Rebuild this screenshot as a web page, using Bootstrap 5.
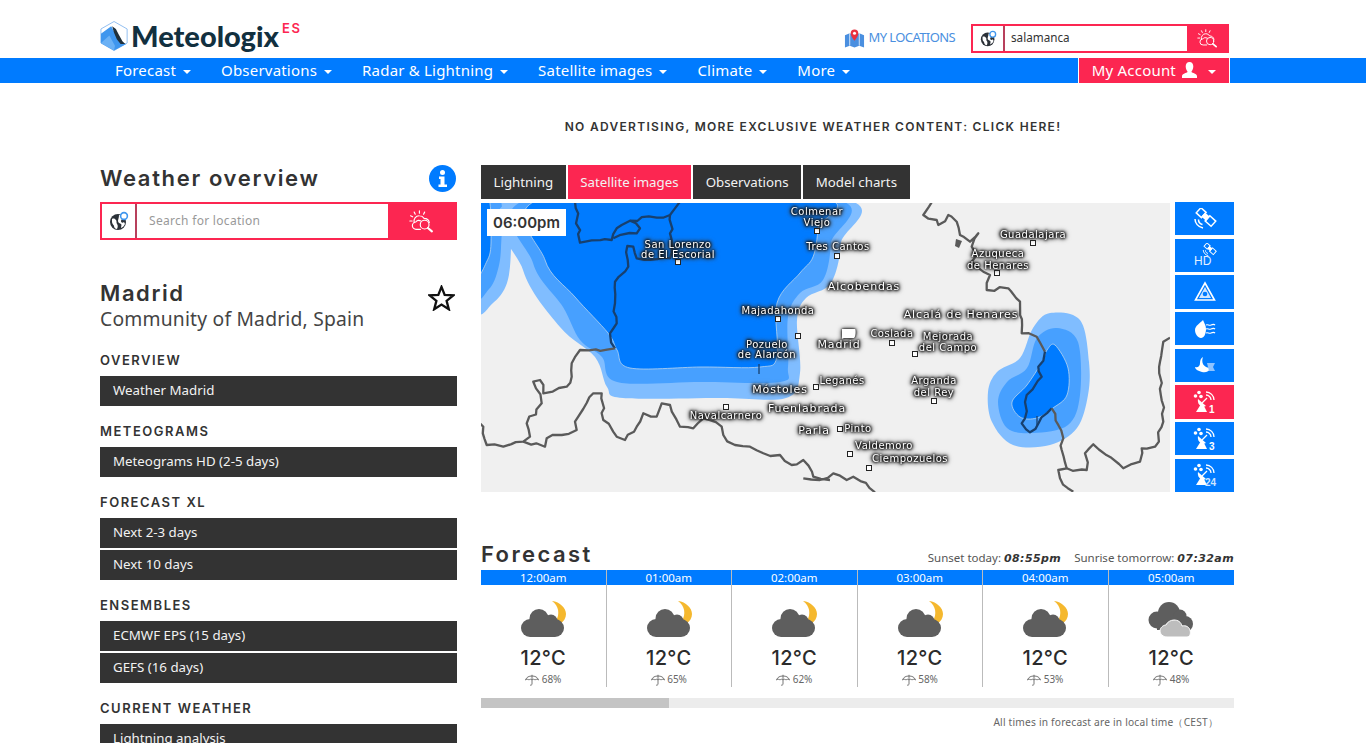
<!DOCTYPE html>
<html lang="en">
<head>
    <meta charset="UTF-8">
    <meta name="viewport" content="width=device-width, initial-scale=1.0">
    <title>Weather overview Madrid - Meteologix</title>
    <link rel="stylesheet" href="https://cdn.jsdelivr.net/npm/bootstrap@5.3.0/dist/css/bootstrap.min.css">
    <style>
        body {
            background: #fff;
            color: #333;
            font-family: "Noto Sans", "Open Sans", sans-serif;
            font-size: 14px;
            height: 743px;
            overflow: hidden;
        }
        .head-font {
            font-family: Inter, "Liberation Sans", sans-serif;
            font-weight: 600;
        }
        .site-wrap { width: 1134px; margin-left: 100px; }
        .top-head { height: 58px; }
        .top-row { height: 58px; padding-top: 18px; }
        .brand-link { margin-top: -5px; }
        .brand-name {
            font-family: Lato, sans-serif;
            font-weight: 900;
            font-size: 29px;
            color: #12303f;
            line-height: 1;
            margin-left: 2px;
        }
        .brand-cc {
            font-family: Inter, sans-serif;
            font-weight: 600;
            color: #fc2651;
            font-size: 13px;
            letter-spacing: 1.5px;
            margin-top: -14px;
            margin-left: 3px;
        }
        .my-locs {
            color: #4a8fe0;
            font-size: 13px;
            letter-spacing: -.6px;
            text-decoration: none;
        }
        .search-top {
            width: 258px;
            height: 29px;
            border: 2px solid #fc2651;
            margin-left: 16px;
            margin-right: 5px;
        }
        .search-side { height: 38px; border: 2px solid #fc2651; }
        .globe-box {
            border-right: 2px solid #b8405c;
            display: flex;
            align-items: center;
            justify-content: center;
        }
        .search-top .globe-box { width: 32px; }
        .search-side .globe-box { width: 35px; }
        .search-input {
            border: 0;
            outline: 0;
            flex: 1;
            min-width: 0;
            color: #333;
            background: #fff;
        }
        .search-top .search-input { font-size: 11.7px; padding: 0 6px; }
        .search-side .search-input { font-size: 12px; padding: 0 12px; letter-spacing: .3px; }
        .search-input::placeholder { color: #999; opacity: 1; }
        .search-go {
            background: #fc2651;
            display: flex;
            align-items: center;
            justify-content: center;
        }
        .search-top .search-go { width: 40px; }
        .search-side .search-go { width: 67px; }
        .main-nav { background: #007bff; height: 25px; padding: 0; }
        .main-nav .site-wrap { height: 25px; }
        .main-nav .nav-link {
            color: #fff;
            font-size: 15px;
            line-height: 25px;
            padding: 0;
            white-space: nowrap;
            letter-spacing: .2px;
        }
        .main-nav .dropdown-toggle::after { margin-left: 7px; vertical-align: 2px; border-top-width: 4px; border-left-width: 4px; border-right-width: 4px; }
        .nav-gap { gap: 30px; padding-left: 15px; }
        .account-btn {
            background: #fc2651;
            width: 152px;
            margin-right: 4px;
            border-left: 1px solid #fff;
            border-right: 1px solid #fff;
            display: flex;
            align-items: center;
            justify-content: center;
        }
        .account-ico { vertical-align: -2px; margin-left: 2px; }
        .promo-line {
            font-size: 12px;
            letter-spacing: 1.3px;
            color: #333;
            text-align: center;
            height: 82px;
            padding-top: 37px;
            padding-left: 292px;
            line-height: 14px;
            white-space: nowrap;
        }
        .side-col { width: 357px; }
        .main-col { width: 753px; }
        .col-gap { gap: 24px; }
        .side-title {
            font-size: 22px;
            letter-spacing: 1.65px;
            line-height: 26px;
            margin: 0;
            color: #333;
        }
        .side-top { height: 37px; padding-top: 0; }
        .info-ico { margin-right: 1px; }
        .star-ico { margin-right: 2px; margin-top: 5px; }
        .place-name { font-size: 22px; letter-spacing: 1.6px; line-height: 26px; margin: 0; color: #333; }
        .place-sub { font-size: 19.3px; line-height: 26px; color: #444; letter-spacing: .2px; }
        .place-block { padding-top: 40px; height: 112px; }
        .menu-head {
            font-size: 13px;
            letter-spacing: 1.5px;
            line-height: 16px;
            margin-bottom: 8px;
            color: #333;
            text-transform: uppercase;
        }
        .menu-block { margin-bottom: 17px; }
        .menu-item {
            display: block;
            background: #333;
            color: #f2f2f2;
            height: 30px;
            line-height: 29px;
            padding-left: 13px;
            margin-bottom: 2px;
            font-size: 13.3px;
            text-decoration: none;
        }
        .map-tabs { gap: 2px; height: 38px; }
        .map-tab {
            background: #333;
            color: #f2f2f2;
            height: 34px;
            line-height: 34px;
            padding: 0 12.5px;
            text-decoration: none;
            font-size: 13.3px;
        }
        .map-tab.on { background: #fc2651; }
        .map-area { height: 289px; gap: 5px; }
        .map-box { width: 689px; height: 289px; background: #f0f0f0; position: relative; overflow: hidden; }
        .map-svg { display: block; }
        .map-time {
            position: absolute;
            left: 6px;
            top: 6px;
            background: #fff;
            height: 27px;
            line-height: 27px;
            padding: 0 6px;
            font-size: 15px;
            font-weight: 600;
            font-family: Inter, sans-serif;
            color: #333;
        }
        .layer-col { width: 59px; gap: 3.3px; margin-top: -1px; }
        .layer-btn {
            background: #007bff;
            height: 33.4px;
            display: flex;
            align-items: center;
            justify-content: center;
        }
        .layer-btn.on { background: #fc2651; }
        .cities text {
            font-family: "DejaVu Sans", sans-serif;
            font-size: 10px;
            letter-spacing: .5px;
            fill: #fff;
            text-anchor: middle;
            filter: drop-shadow(0 0 1px #000) drop-shadow(0 0 1.5px #000) drop-shadow(0 0 2px #444);
        }
        .cities text.big { font-size: 11px; letter-spacing: .9px; }
        .map-flag { filter: drop-shadow(0 0 1px #000) drop-shadow(0 0 2px #222); }
        .fc-head { height: 45px; margin-top: 33px; padding-bottom: 3px; }
        .fc-title { font-size: 22px; letter-spacing: 2.4px; line-height: 26px; margin: 0; color: #333; }
        .fc-sun { font-size: 11.5px; color: #555; line-height: 16px; }
        .fc-sun b {
            font-family: "DejaVu Sans", sans-serif;
            font-weight: 700;
            font-style: italic;
            font-size: 11px;
            color: #333;
            letter-spacing: .4px;
        }
        .sun-next { margin-left: 10px; }
        .fc-grid { display: grid; grid-template-columns: repeat(6, 1fr); }
        .fc-cell { text-align: center; height: 117px; border-right: 1px solid #bbb; }
        .fc-cell:last-child { border-right: 0; }
        .fc-hour {
            background: #007bff;
            color: #fff;
            height: 15px;
            line-height: 15px;
            font-size: 11.5px;
        }
        .fc-icon { display: block; margin: 15px auto 0; }
        .fc-temp {
            font-family: Inter, sans-serif;
            font-size: 20px;
            font-weight: 500;
            line-height: 24px;
            margin-top: 6px;
            color: #2b2b2b;
            letter-spacing: .3px;
        }
        .fc-rain { font-size: 10px; color: #666; line-height: 14px; margin-top: 2px; }
        .fc-scroll { background: #ececec; height: 10px; margin-top: 11px; }
        .fc-thumb { background: #c4c4c4; width: 188px; height: 10px; }
        .fc-note { font-size: 10.2px; color: #666; text-align: right; padding-right: 16px; margin-top: 7px; letter-spacing: .2px; }
    </style>
</head>
<body>

    <svg width="0" height="0" class="d-block position-absolute">
        <defs>
            <symbol id="icoGlobe" viewBox="0 0 20 20">
                <circle cx="9" cy="11" r="8" fill="#2b3138"/>
                <path d="M3 8c2-1 3 0 4 1s0 3 1 4 1 3 0 5c-2 0-3-2-3-3s-2-2-2-4zM10 4c2 0 4 1 5 3-1 1-3 1-3 3s2 2 3 1l1 2c-1 2-2 3-4 4 0-2 1-3 0-4s-3-1-3-3 1-3 1-6z" fill="#fff"/>
                <circle cx="15" cy="5" r="3.4" fill="#fff" stroke="#3f96ee" stroke-width="1.6"/>
            </symbol>
            <symbol id="icoSearch" viewBox="0 0 24 22">
                <g fill="none" stroke="#fff" stroke-width="1.1" stroke-linecap="round">
                    <path d="M5 2l1 2M10 .8v2.200M15 2l-1 2M1.500 5.500l2 1M.8 10.500H3"/>
                    <path d="M5 12a5 5 0 0 1 5-6.500c2 0 3.500 1 4.500 2.500 2.500 0 4.500 1.500 5 4"/>
                    <path d="M11 18.500H7a3.500 3.500 0 0 1-.500-7c1-1.500 3-2 5-1"/>
                    <circle cx="15" cy="14" r="4.200"/>
                    <path d="M18.200 17.200l3.800 3.300" stroke-width="2"/>
                </g>
            </symbol>
            <symbol id="icoMoon" viewBox="0 0 50 40">
                <path d="M34 1C42 2 48 8 48 14 48 18 46 21 42 24L38 21C42 14 41 6 34 1z" fill="#f5b82e"/>
                <g fill="#5e5e5e">
                    <circle cx="12" cy="28" r="9"/>
                    <circle cx="21" cy="18.500" r="9.500"/>
                    <circle cx="33" cy="21" r="6.500"/>
                    <circle cx="37" cy="28" r="9"/>
                    <rect x="12" y="20" width="25" height="17"/>
                </g>
            </symbol>
            <symbol id="icoClouds" viewBox="0 0 50 40">
                <g fill="#5e5e5e">
                    <circle cx="11" cy="20" r="8.500"/>
                    <circle cx="23" cy="13" r="11"/>
                    <circle cx="34" cy="16" r="6.500"/>
                    <circle cx="39" cy="24" r="8"/>
                    <rect x="11" y="16" width="28" height="14"/>
                </g>
                <g fill="#bdbdbd" stroke="#fff" stroke-width="1">
                    <path d="M21 37c-4 0-7-3-7-6s3-6 6-6c1-3 5-5 8-5 4 0 7 2 8 6 4-1 7 1 8 4 1 3 0 7-3 7z"/>
                </g>
            </symbol>
            <symbol id="icoRain" viewBox="0 0 14 12">
                <g fill="none" stroke="#666" stroke-width=".9">
                    <path d="M.5 6c1-3 3.500-4 6.500-4s5.500 1 6.500 4c-1-1-2.500-1-3.500 0-1-1-2-1-3 0-1-1-2-1-3 0-1-1-2.500-1-3.500 0z"/>
                    <path d="M7 .8v9.200c0 1-1 1.500-2 1"/>
                </g>
            </symbol>
            <symbol id="icoRadar" viewBox="0 0 24 24">
                <g fill="#fff">
                    <path d="M5 9C4 14 8 18 13 16z"/>
                    <path d="M8 14L3 22H14L11 16z"/>
                    <circle cx="6" cy="2.500" r="1.800"/>
                    <circle cx="2.500" cy="6" r="1.800"/>
                    <circle cx="8" cy="6.500" r="1.800"/>
                </g>
                <g fill="none" stroke="#fff" stroke-width="1.300">
                    <path d="M9 13l5-5"/>
                    <path d="M13 5a5 5 0 0 1 5 5M13 2a8 8 0 0 1 8 8"/>
                </g>
            </symbol>
            <symbol id="icoSat" viewBox="0 0 24 22">
                <g transform="rotate(42 13 9)" fill="none" stroke="#fff" stroke-width="1.500">
                    <rect x="3" y="5.500" width="7" height="7"/>
                    <rect x="10" y="7" width="5" height="4" fill="#fff"/>
                    <rect x="15" y="5.500" width="8" height="7"/>
                </g>
                <g fill="none" stroke="#fff" stroke-width="1.500">
                    <path d="M2 11c0 4 3 8 8 9M5.500 11.500c0 2.500 1.500 4.500 4 5"/>
                </g>
            </symbol>
        </defs>
    </svg>

    <header class="top-head">
        <div class="site-wrap top-row d-flex align-items-center justify-content-between">
            <a href="#" class="brand-link d-flex align-items-center text-decoration-none">
                <svg width="29" height="32" viewBox="0 0 31 33">
                    <path d="M15 1l14 8v15l-14 8-14-8V9z" fill="#fff" stroke="#8cbcf0" stroke-width="1"/>
                    <path d="M1 14l11-8 9 17 7 2-13 7-14-8z" fill="#3f96ee"/>
                    <path d="M1 24l9-8 6 11-1 5z" fill="#6bb1f5"/>
                    <path d="M13 6l4 3 3 6 4 7 3 3-5 0-4-5-3-7z" fill="#20303b"/>
                </svg>
                <span class="brand-name">Meteologix</span>
                <span class="brand-cc">ES</span>
            </a>
            <div class="d-flex align-items-center">
                <svg width="21" height="20" viewBox="0 0 22 20" class="me-1">
                    <path d="M1 7l5-2 5 2 5-2 5 2v13l-5-2-5 2-5-2-5 2z" fill="#4a8fe0"/>
                    <path d="M6 5v13M16 5v13" stroke="#fff" stroke-width=".8"/>
                    <path d="M11 13c-2-3-4-5-4-8a4 4 0 0 1 8 0c0 3-2 5-4 8z" fill="#e8303f"/>
                    <circle cx="11" cy="5" r="1.600" fill="#fff"/>
                </svg>
                <a href="#" class="my-locs">MY LOCATIONS</a>
                <div class="search-top d-flex">
                    <div class="globe-box"><svg width="17" height="17"><use href="#icoGlobe"/></svg></div>
                    <input class="search-input" type="text" value="salamanca">
                    <div class="search-go"><svg width="21" height="19"><use href="#icoSearch"/></svg></div>
                </div>
            </div>
        </div>
    </header>

    <nav class="main-nav">
        <div class="site-wrap d-flex justify-content-between">
            <ul class="nav nav-gap">
                <li class="nav-item"><a class="nav-link dropdown-toggle" href="#">Forecast</a></li>
                <li class="nav-item"><a class="nav-link dropdown-toggle" href="#">Observations</a></li>
                <li class="nav-item"><a class="nav-link dropdown-toggle" href="#">Radar &amp; Lightning</a></li>
                <li class="nav-item"><a class="nav-link dropdown-toggle" href="#">Satellite images</a></li>
                <li class="nav-item"><a class="nav-link dropdown-toggle" href="#">Climate</a></li>
                <li class="nav-item"><a class="nav-link dropdown-toggle" href="#">More</a></li>
            </ul>
            <div class="account-btn">
                <a class="nav-link dropdown-toggle" href="#">My Account
                    <svg width="15" height="16" viewBox="0 0 15 16" class="account-ico"><path d="M7.500 0c2.500 0 3.800 2 3.800 4.500S10 9 9.300 10c1 1 5.700 1.500 5.700 4v2H0v-2c0-2.500 4.700-3 5.700-4C5 9 3.700 7 3.700 4.500S5 0 7.500 0z" fill="#fff"/></svg>
                </a>
            </div>
        </div>
    </nav>

    <div class="site-wrap">
        <div class="promo-line head-font">NO ADVERTISING, MORE EXCLUSIVE WEATHER CONTENT: CLICK HERE!</div>

        <div class="d-flex col-gap">
            <aside class="side-col">
                <div class="side-top d-flex justify-content-between align-items-start">
                    <h2 class="side-title head-font">Weather overview</h2>
                    <svg width="27" height="27" viewBox="0 0 27 27" class="info-ico">
                        <circle cx="13.500" cy="13.500" r="13.500" fill="#007bff"/>
                        <circle cx="13.500" cy="7.500" r="2.500" fill="#fff"/>
                        <path d="M10 11.500h5.500v8H18v2.500H9.500v-2.500H11.500v-5.500H10z" fill="#fff"/>
                    </svg>
                </div>
                <div class="search-side d-flex">
                    <div class="globe-box"><svg width="20" height="20"><use href="#icoGlobe"/></svg></div>
                    <input class="search-input" type="text" placeholder="Search for location">
                    <div class="search-go"><svg width="25" height="23"><use href="#icoSearch"/></svg></div>
                </div>
                <div class="place-block d-flex justify-content-between">
                    <div>
                        <h3 class="place-name head-font">Madrid</h3>
                        <div class="place-sub">Community of Madrid, Spain</div>
                    </div>
                    <svg width="27" height="26" viewBox="0 0 28 27" class="star-ico">
                        <path d="M14 2l3.300 8.300 9 .5-7 5.700 2.300 8.700L14 20.300l-7.600 4.900 2.300-8.700-7-5.700 9-.5z" fill="#fff" stroke="#111" stroke-width="2.400"/>
                    </svg>
                </div>
                <div class="menu-block">
                    <div class="menu-head head-font">Overview</div>
                    <a href="#" class="menu-item">Weather Madrid</a>
                </div>
                <div class="menu-block">
                    <div class="menu-head head-font">Meteograms</div>
                    <a href="#" class="menu-item">Meteograms HD (2-5 days)</a>
                </div>
                <div class="menu-block">
                    <div class="menu-head head-font">Forecast XL</div>
                    <a href="#" class="menu-item">Next 2-3 days</a>
                    <a href="#" class="menu-item">Next 10 days</a>
                </div>
                <div class="menu-block">
                    <div class="menu-head head-font">Ensembles</div>
                    <a href="#" class="menu-item">ECMWF EPS (15 days)</a>
                    <a href="#" class="menu-item">GEFS (16 days)</a>
                </div>
                <div class="menu-block">
                    <div class="menu-head head-font">Current weather</div>
                    <a href="#" class="menu-item">Lightning analysis</a>
                </div>
            </aside>

            <main class="main-col">
                <div class="map-tabs d-flex">
                    <a href="#" class="map-tab">Lightning</a>
                    <a href="#" class="map-tab on">Satellite images</a>
                    <a href="#" class="map-tab">Observations</a>
                    <a href="#" class="map-tab">Model charts</a>
                </div>
                <div class="map-area d-flex">
                    <div class="map-box">
                        <svg class="map-svg" width="689" height="289" viewBox="0 0 689 289">
                            <g id="blobs"></g>
                            <g id="lines" fill="none" stroke="#5a5a5a" stroke-width="2.300" stroke-linejoin="round"></g>
                            <g fill="#fff" stroke="#222" stroke-width="1">
                                <rect x="194.500" y="56.500" width="5" height="5"/><rect x="333.500" y="25.500" width="5" height="5"/>
                                <rect x="353.500" y="50.500" width="5" height="5"/><rect x="549.500" y="37.500" width="5" height="5"/>
                                <rect x="513.500" y="67.500" width="5" height="5"/><rect x="294.500" y="113.500" width="5" height="5"/>
                                <rect x="314.500" y="130.500" width="5" height="5"/><rect x="408.500" y="137.500" width="5" height="5"/>
                                <rect x="431.500" y="148.500" width="5" height="5"/><rect x="332.500" y="181.500" width="5" height="5"/>
                                <rect x="450.500" y="195.500" width="5" height="5"/><rect x="242.500" y="201.500" width="5" height="5"/>
                                <rect x="356.500" y="223.500" width="5" height="5"/><rect x="366.500" y="248.500" width="5" height="5"/>
                                <rect x="385.500" y="262.500" width="5" height="5"/>
                            </g>
                            <g class="cities">
                                <text x="336" y="12">Colmenar</text><text x="336" y="23">Viejo</text>
                                <text x="197" y="45">San Lorenzo</text><text x="197" y="55">de El Escorial</text>
                                <text x="357" y="47">Tres Cantos</text>
                                <text x="383" y="87" class="big">Alcobendas</text>
                                <text x="552" y="35">Guadalajara</text>
                                <text x="517" y="54">Azuqueca</text><text x="517" y="66">de Henares</text>
                                <text x="297" y="111">Majadahonda</text>
                                <text x="286" y="145">Pozuelo</text><text x="286" y="155">de Alarcón</text>
                                <text x="358" y="145" class="big">Madrid</text>
                                <text x="411" y="134">Coslada</text>
                                <text x="467" y="137">Mejorada</text><text x="467" y="148">del Campo</text>
                                <text x="480" y="115" class="big">Alcalá de Henares</text>
                                <text x="361" y="181">Leganés</text>
                                <text x="299" y="190" class="big">Móstoles</text>
                                <text x="453" y="181">Arganda</text><text x="453" y="193">del Rey</text>
                                <text x="245" y="216">Navalcarnero</text>
                                <text x="326" y="209" class="big">Fuenlabrada</text>
                                <text x="333" y="231" class="big">Parla</text>
                                <text x="377" y="229">Pinto</text>
                                <text x="403" y="246">Valdemoro</text>
                                <text x="429" y="259">Ciempozuelos</text>
                            </g>
                            <path class="map-flag" d="M361 126h13c1 0 1 8-1 9h-10c-1 0-2 1-2 1z" fill="#fff"/>
                            <path d="M278 161v10M556 213v9" stroke="#17406f" stroke-width="1.300"/>
                        </svg>
                        <div class="map-time">06:00pm</div>
                    </div>
                    <div class="layer-col d-flex flex-column">
                        <div class="layer-btn">
                            <svg width="24" height="22"><use href="#icoSat"/></svg>
                        </div>
                        <div class="layer-btn">
                            <svg width="26" height="24" viewBox="0 0 26 24"><svg x="10" y="0" width="15" height="14"><use href="#icoSat"/></svg><text x="2" y="22" font-size="12" fill="#e4f0ff" font-family="Liberation Sans">HD</text></svg>
                        </div>
                        <div class="layer-btn">
                            <svg width="22" height="21" viewBox="0 0 22 21"><path d="M11 2l9.500 17h-19z" fill="none" stroke="#fff" stroke-width="1.600"/><path d="M11 6l6 11H5z" fill="#cfe5ff"/><circle cx="11" cy="13" r="2.300" fill="#007bff"/></svg>
                        </div>
                        <div class="layer-btn">
                            <svg width="22" height="20" viewBox="0 0 22 20"><path d="M9 1c1 3 3 5 3 9 0 5-2 9-5 9s-6-4-6-8 5-7 8-10z" fill="#fff"/><g fill="none" stroke="#fff" stroke-width="1.200"><path d="M12 6c2-1 3 1 5 0s3-1 4 0M12 10c2-1 3 1 5 0s3-1 4 0M12 14c2-1 3 1 5 0s3-1 4 0"/></g></svg>
                        </div>
                        <div class="layer-btn">
                            <svg width="22" height="18" viewBox="0 0 22 18"><path d="M9 1C7 6 9 12 17 12c-2 4-6 5-9 4-4-1-7-3-7-5 3 1 5-1 5-4 0-3 1-5 3-6z" fill="#fff"/><path d="M13 7h8l-2 4 2 4h-6z" fill="#8fc3ff"/></svg>
                        </div>
                        <div class="layer-btn on">
                            <svg width="24" height="24"><use href="#icoRadar"/><text x="16" y="23" font-size="10" font-weight="700" fill="#fff" font-family="Liberation Sans">1</text></svg>
                        </div>
                        <div class="layer-btn">
                            <svg width="24" height="24"><use href="#icoRadar"/><text x="16" y="23" font-size="10" font-weight="700" fill="#fff" font-family="Liberation Sans">3</text></svg>
                        </div>
                        <div class="layer-btn">
                            <svg width="26" height="24"><use href="#icoRadar"/><text x="13" y="23" font-size="10" font-weight="700" fill="#cfe5ff" font-family="Liberation Sans">24</text></svg>
                        </div>
                    </div>
                </div>

                <div class="fc-head d-flex justify-content-between align-items-end">
                    <h2 class="fc-title head-font">Forecast</h2>
                    <div class="fc-sun">Sunset today: <b>08:55pm</b> <span class="sun-next">Sunrise tomorrow:</span> <b>07:32am</b></div>
                </div>
                <div class="fc-grid" id="fcGrid"></div>
                <div class="fc-scroll"><div class="fc-thumb"></div></div>
                <div class="fc-note">All times in forecast are in local time（CEST）</div>
            </main>
        </div>
    </div>

    <script src="https://cdn.jsdelivr.net/npm/bootstrap@5.3.0/dist/js/bootstrap.bundle.min.js"></script>
    <script>
        // smooth closed curve through map points
        function curve(p) {
            let d = 'M' + p[0][0] + ' ' + p[0][1];
            const n = p.length;
            for (let i = 0; i < n; i++) {
                const a = p[(i - 1 + n) % n];
                const b = p[i];
                const c = p[(i + 1) % n];
                const e = p[(i + 2) % n];
                d += 'C' + (b[0] + (c[0] - a[0]) / 6).toFixed(1) + ' ' + (b[1] + (c[1] - a[1]) / 6).toFixed(1) + ' '
                    + (c[0] - (e[0] - b[0]) / 6).toFixed(1) + ' ' + (c[1] - (e[1] - b[1]) / 6).toFixed(1) + ' ' + c[0] + ' ' + c[1];
            }
            return d + 'Z';
        }

        const blobs = [
            ['#80bdff', [[-5,-5],[29,-5],[30,45],[26,80],[12,100],[-5,104]]],
            ['#47a0ff', [[-5,-5],[19,-5],[20,45],[16,70],[8,86],[-5,90]]],
            ['#007bff', [[-5,-5],[8,-5],[10,40],[6,58],[-5,70]]],
            ['#80bdff', [[40,-5],[42,67],[79,124],[114,154],[126,184],[142,195],[240,195],[305,195],[319,170],[316,117],[325,95],[350,80],[360,40],[356,-5]]],
            ['#47a0ff', [[52,-5],[52,60],[82,104],[99,137],[121,154],[136,179],[220,179],[299,179],[307,164],[307,114],[319,90],[342,77],[350,40],[348,-5]]],
            ['#007bff', [[64,-5],[64,57],[94,94],[127,130],[136,147],[149,165],[220,164],[279,164],[296,154],[296,100],[319,70],[332,54],[337,25],[336,-5]]],
            ['#80bdff', [[569,110],[599,117],[608,159],[607,192],[596,225],[569,242],[532,242],[511,219],[507,189],[516,169],[539,155],[552,125]]],
            ['#47a0ff', [[576,125],[597,139],[599,192],[587,222],[552,230],[526,225],[517,199],[526,179],[546,165],[556,135]]],
            ['#007bff', [[574,142],[587,165],[586,192],[572,205],[556,215],[539,214],[531,199],[546,182],[561,159],[566,147]]]
        ];
        document.getElementById('blobs').innerHTML = blobs.map(b => {
            const thin = b[0] === '#007bff' ? ' stroke="#b9d4ee" stroke-width=".8"' : '';
            return '<path fill="' + b[0] + '"' + thin + ' d="' + curve(b[1]) + '"/>';
        }).join('');

        // borders are traced in zoomed reference coords, hence the two offsets.
        // each segment gets a wobble so the line looks like a real boundary
        let seed = 7;
        function wob() {
            seed = (seed * 73 + 41) % 101;
            return (seed / 101 - .5) * 4;
        }
        function rough(pts) {
            const out = [];
            pts.forEach((q, i) => {
                if (i > 0) {
                    const o = pts[i - 1];
                    const len = Math.hypot(q[0] - o[0], q[1] - o[1]);
                    const steps = Math.max(1, Math.round(len / 7));
                    for (let s = 1; s < steps; s++) {
                        out.push([o[0] + (q[0] - o[0]) * s / steps + wob(), o[1] + (q[1] - o[1]) * s / steps + wob()]);
                    }
                }
                out.push(q);
            });
            return out.map(q => q[0].toFixed(1) + ' ' + q[1].toFixed(1)).join(',');
        }
        const leftLine = z => z.map(q => [q[0] / 3 - 1, q[1] / 3 - 43]);
        const rightLine = z => z.map(q => [q[0] / 3 + 339, q[1] / 3 - 8]);
        const lines = [
            [leftLine([[285,125],[300,248],[395,240],[410,205],[450,182],[570,165],[600,125]]), '#17406f'],
            [leftLine([[450,182],[480,205],[470,220],[400,235]]), '#17406f'],
            [leftLine([[570,165],[575,240],[570,295],[470,295],[460,260],[442,258],[445,320],[405,365],[405,430],[410,490],[390,520],[405,565]]), '#17406f'],
            [leftLine([[405,565],[300,570],[275,610],[275,650],[260,680],[190,700],[180,660],[160,665],[185,730],[140,790],[150,830],[130,845],[70,860],[20,855],[10,800],[0,790]])],
            [leftLine([[130,845],[195,860],[200,835],[290,810],[285,785],[340,700],[365,700],[370,780],[410,830],[435,840],[470,800],[490,760],[530,770],[545,730],[570,735],[600,800],[640,805],[670,775],[725,800],[730,825],[765,855],[810,860],[850,880],[900,885],[935,915],[970,900],[1000,950],[1050,960]])],
            [rightLine([[-50,850],[0,855],[40,835],[80,855],[100,845],[165,892]])],
            [rightLine([[335,22],[310,60],[350,75],[355,90],[385,60],[410,80],[420,120],[450,140],[475,115],[455,155],[470,180],[455,200],[490,230],[510,240],[500,285],[565,280],[600,320],[605,415],[650,425],[675,470]])],
            [rightLine([[675,470],[655,515],[665,545],[620,600],[615,670],[605,685],[630,712],[695,640]]), '#17406f'],
            [rightLine([[695,640],[730,730],[725,765],[740,820],[715,825],[720,850],[760,890]])],
            [rightLine([[740,820],[800,825],[795,775],[820,748],[910,820],[960,800],[965,760],[1005,755],[1030,680],[1020,500],[1030,440],[1050,428]])]
        ];
        document.getElementById('lines').innerHTML = lines.map(l =>
            '<polyline points="' + rough(l[0]) + '"' + (l[1] ? ' stroke="' + l[1] + '"' : '') + '/>'
        ).join('') + '<polygon points="475,36 481,38 478,45 474,43" fill="#5a5a5a" stroke="none"/>';

        const hours = [
            ['12:00am', 'icoMoon', '68%'], ['01:00am', 'icoMoon', '65%'], ['02:00am', 'icoMoon', '62%'],
            ['03:00am', 'icoMoon', '58%'], ['04:00am', 'icoMoon', '53%'], ['05:00am', 'icoClouds', '48%']
        ];
        document.getElementById('fcGrid').innerHTML = hours.map(h =>
            '<div class="fc-cell"><div class="fc-hour">' + h[0] + '</div>'
            + '<svg class="fc-icon" width="50" height="40"><use href="#' + h[1] + '"/></svg>'
            + '<div class="fc-temp">12°C</div>'
            + '<div class="fc-rain"><svg width="14" height="12" class="align-text-bottom"><use href="#icoRain"/></svg> ' + h[2] + '</div></div>'
        ).join('');
    </script>
</body>
</html>
